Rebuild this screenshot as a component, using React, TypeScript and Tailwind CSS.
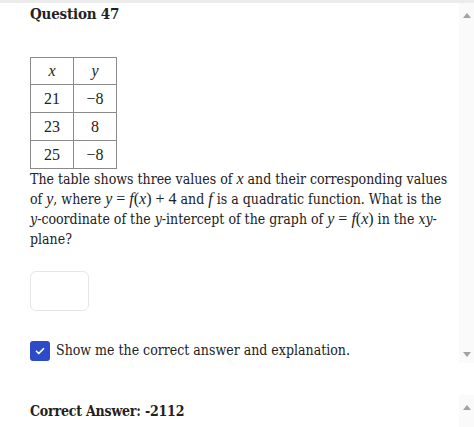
import React from 'react';

const slab = { fontFamily: '"DejaVu Serif Condensed", "DejaVu Serif", serif', fontStretch: 'condensed' };

function M({ children }: { children: React.ReactNode }) {
	return (
		<span className="italic text-[16px] leading-[16px]" style={{ fontFamily: '"Liberation Serif", serif', fontStretch: 'normal' }}>
			{children}
		</span>
	);
}

function R({ children }: { children: React.ReactNode }) {
	return (
		<span className="text-[16px] leading-[16px]" style={{ fontFamily: '"Liberation Serif", serif', fontStretch: 'normal' }}>
			{children}
		</span>
	);
}

function ScrollTrack({ down = true }: { down?: boolean }) {
	return (
		<div className="flex flex-col shrink-0 items-center justify-between w-[15px] bg-[#fafafa] pt-[10px] pb-[6px]">
			<div className="w-0 h-0 border-l-[4px] border-r-[4px] border-b-[5px] border-l-transparent border-r-transparent border-b-[#a3a3a3]" />
			{down && (
				<div className="w-0 h-0 border-l-[4px] border-r-[4px] border-t-[5px] border-l-transparent border-r-transparent border-t-[#a3a3a3]" />
			)}
		</div>
	);
}

const rows = [
	['21', '−8'],
	['23', '8'],
	['25', '−8'],
];

export default function App() {
	return (
		<div className="w-[474px] h-[427px] bg-white text-[#222] overflow-hidden" style={slab}>
			<div className="h-[3px] bg-[#ececec]" />
			<div className="flex h-[360px]">
				<div className="flex-grow min-w-0 pl-[30px] pr-[4px]">
					<h1 className="mt-[1px] text-[15px] font-bold leading-[20px] tracking-[-0.2px]">Question 47</h1>

					<table className="mt-[33px] border-collapse text-center">
						<thead>
							<tr>
								<th className="w-[43px] h-[27px] border border-[#8a8a8a] font-normal">
									<M>x</M>
								</th>
								<th className="w-[43px] h-[27px] border border-[#8a8a8a] font-normal">
									<M>y</M>
								</th>
							</tr>
						</thead>
						<tbody>
							{rows.map(([x, y]) => (
								<tr key={x}>
									<td className="h-[28px] border border-[#8a8a8a]">
										<R>{x}</R>
									</td>
									<td className="h-[28px] border border-[#8a8a8a]">
										<R>{y}</R>
									</td>
								</tr>
							))}
						</tbody>
					</table>

					<p className="text-[14px] leading-[20px]">
						The table shows three values of <M>x</M> and their corresponding values of <M>y</M>,
						where <M>y</M> <R>=</R> <M>f</M>
						<R>(</R>
						<M>x</M>
						<R>)</R> <R>+</R> <R>4</R> and <M>f</M> is a quadratic function. What is the{' '}
						<span className="italic">y</span>-coordinate of the <span className="italic">y</span>
						-intercept of the graph of <M>y</M> <R>=</R> <M>f</M>
						<R>(</R>
						<M>x</M>
						<R>)</R> in the <span className="italic">xy</span>-plane?
					</p>

					<div className="mt-[22px] w-[59px] h-[40px] rounded-[6px] border border-[#e6e6e6]" />

					<label className="flex items-center mt-[29px] gap-[6px] text-[14px]">
						<span className="flex items-center justify-center w-[20px] h-[20px] rounded-[3px] bg-[#2d4ac8]">
							<svg className="w-[12px] h-[12px]" viewBox="0 0 24 24" fill="none" stroke="white" strokeWidth="3.5" strokeLinecap="round" strokeLinejoin="round">
								<path d="M5 12.5l4.5 4.5L19 7.5" />
							</svg>
						</span>
						Show me the correct answer and explanation.
					</label>
				</div>
				<ScrollTrack />
			</div>
			<div className="flex h-[64px] mt-[32px]">
				<div className="flex-grow pl-[30px] pt-[6px]">
					<p className="text-[14px] font-bold leading-[20px] tracking-[-0.2px]">Correct Answer: -2112</p>
				</div>
				<ScrollTrack down={false} />
			</div>
		</div>
	);
}
